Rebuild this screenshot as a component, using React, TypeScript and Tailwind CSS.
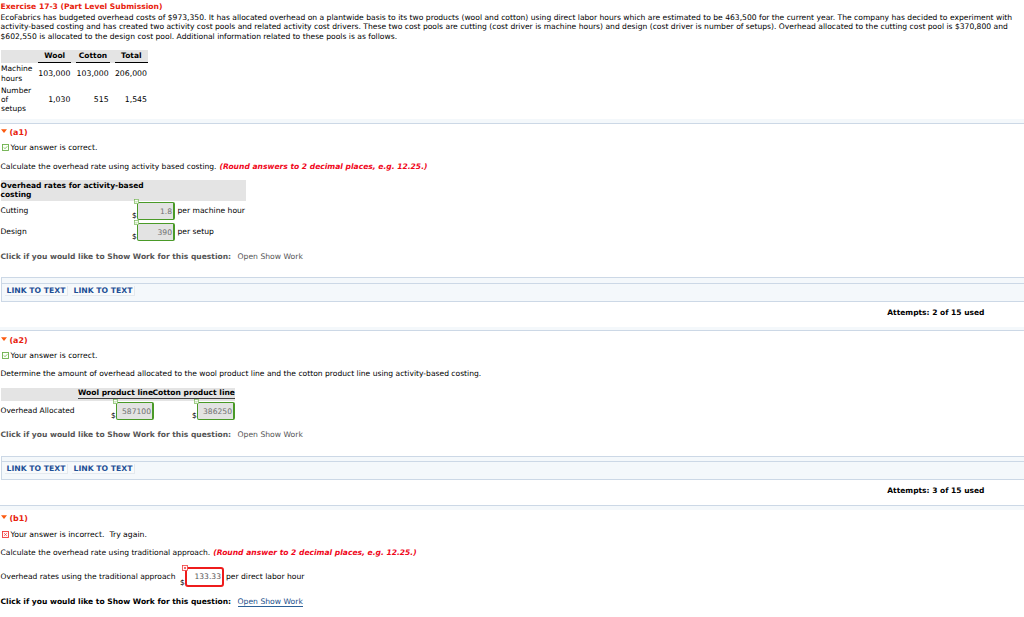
import type { ReactNode } from "react";

function StatusIcon({ ok, className }: { ok: boolean; className: string }) {
  const color = ok ? "#6cb04a" : "#f03a3a";
  return (
    <svg viewBox="0 0 7 7" className={className} fill="none" stroke={color}>
      <rect x="0.5" y="0.5" width="6" height="6" fill={ok ? "#fbfff8" : "#fff6f6"} strokeWidth="0.9" />
      {ok ? (
        <path d="M1.8 3.4 L3 4.7 L5.3 2.3" strokeWidth="0.8" />
      ) : (
        <path d="M2.3 2.3 L4.7 4.7 M4.7 2.3 L2.3 4.7" strokeWidth="0.9" />
      )}
    </svg>
  );
}

function PartHeading({ children }: { children: ReactNode }) {
  return (
    <div className="flex h-[17px] items-center font-bold text-[#e8210c]">
      <svg viewBox="0 0 6 4" className="mb-[3px] ml-px h-[4px] w-[6px]">
        <path d="M0 0.2 H6 L3 4 Z" fill="#fb5a10" />
      </svg>
      <span className="ml-[2.5px] text-[7.9px]">{children}</span>
    </div>
  );
}

function Verdict({ ok, children }: { ok: boolean; children: ReactNode }) {
  return (
    <div className="flex h-[13px] items-center text-[7.7px]">
      <StatusIcon ok={ok} className="ml-[2px] mr-[1.5px] h-[7px] w-[7px]" />
      <span className="whitespace-pre">{children}</span>
    </div>
  );
}

function Answer({ value, ok = true }: { value: string; ok?: boolean }) {
  return (
    <div className="flex items-end">
      <span className="w-[5px] leading-[8px] text-black">$</span>
      <div
        className={
          ok
            ? "relative flex h-[18px] w-[38px] items-center justify-end rounded-[2px] border border-r-2 border-[#4a9a28] bg-[#e3e3e3] pr-px pt-px text-[#707070]"
            : "relative flex h-[20px] w-[39px] items-center justify-end rounded-[3px] border-2 border-[#ee1c1c] bg-white pr-px text-[#555]"
        }
      >
        <StatusIcon ok={ok} className={ok ? "absolute -left-[4px] -top-[4px] h-[5px] w-[5px]" : "absolute -left-[5px] -top-[4px] h-[6px] w-[6px]"} />
        {value}
      </div>
    </div>
  );
}

function ShowWork({ active = false }: { active?: boolean }) {
  return (
    <div className={active ? "flex h-[12px] items-center pl-[0.5px] text-black" : "flex h-[12px] items-center pl-[0.5px] text-[#555]"}>
      <span className="w-[237px] text-[7.55px] font-bold">Click if you would like to Show Work for this question:</span>
      <span className={active ? "border-b border-[#2b5f96] text-[7.67px] leading-[8px] text-[#1c4f8a]" : "text-[7.67px]"}>
        Open Show Work
      </span>
    </div>
  );
}

function LinkPanel({ compact = false }: { compact?: boolean }) {
  return (
    <div className="ml-px border-y border-l border-[#ccd8e6] bg-[#f4f8fb]">
      <div className={compact ? "h-[4px]" : "h-[5px]"} />
      <div className="flex h-[18px] gap-[4px] border-t border-[#ccd8e6] pl-[3px] pt-[2px] text-[7.7px] font-bold text-[#1d4f96]">
        <span className="flex h-[10px] w-[63px] items-center border-b border-r border-[#e4e9ee] bg-[#f8fafb] pl-[1.5px]">LINK TO TEXT</span>
        <span className="flex h-[10px] w-[63px] items-center border-b border-r border-[#e4e9ee] bg-[#f8fafb] pl-[1.5px]">LINK TO TEXT</span>
      </div>
    </div>
  );
}

function Attempts({ children }: { children: ReactNode }) {
  return <div className="flex h-[12px] items-center justify-end pr-[39.5px] text-[7.52px] font-bold">{children}</div>;
}

const columns = [
  { name: "Wool", hours: "103,000", setups: "1,030" },
  { name: "Cotton", hours: "103,000", setups: "515" },
  { name: "Total", hours: "206,000", setups: "1,545" },
];

export default function App() {
  return (
    <div className="h-[617px] w-[1024px] overflow-hidden bg-white font-['DejaVu_Sans',Verdana,sans-serif] text-[7.6px] leading-[9.3px] text-black">
      <div className="h-[119px]">
        <div className="flex h-[12.5px] items-center pl-[0.5px] font-bold text-[#e8210c]">Exercise 17-3 (Part Level Submission)</div>
        <div className="h-[28px] whitespace-nowrap pl-[0.5px] text-[7.605px] leading-[9.6px]">
          <p>EcoFabrics has budgeted overhead costs of $973,350. It has allocated overhead on a plantwide basis to its two products (wool and cotton) using direct labor hours which are estimated to be 463,500 for the current year. The company has decided to experiment with</p>
          <p>activity-based costing and has created two activity cost pools and related activity cost drivers. These two cost pools are cutting (cost driver is machine hours) and design (cost driver is number of setups). Overhead allocated to the cutting cost pool is $370,800 and</p>
          <p>$602,550 is allocated to the design cost pool. Additional information related to these pools is as follows.</p>
        </div>
        <div className="ml-px mt-[9.5px] flex h-[13px] w-[147px] gap-[5px] bg-[#e4e4e4] pl-[37px]">
          {columns.map((c) => (
            <div key={c.name} className="flex flex-1 items-center justify-center border-b border-black text-[7.5px] font-bold">
              {c.name}
            </div>
          ))}
        </div>
        <div className="ml-px flex h-[21px] w-[147px] items-center gap-[5px]">
          <div className="w-[32px] text-[7.5px]">Machine hours</div>
          {columns.map((c) => (
            <div key={c.name} className="flex-1 pr-px text-right text-[7.75px]">{c.hours}</div>
          ))}
        </div>
        <div className="ml-px mt-px flex h-[29px] w-[147px] items-center gap-[5px]">
          <div className="w-[32px] text-[7.5px]">Number of setups</div>
          {columns.map((c) => (
            <div key={c.name} className="flex-1 pr-px text-right text-[7.75px]">{c.setups}</div>
          ))}
        </div>
      </div>

      <section className="h-[208px]">
        <div className="h-[5px] border-b border-[#ccd8e6] bg-[#f4f8fb]" />
        <PartHeading>(a1)</PartHeading>
        <Verdict ok>Your answer is correct.</Verdict>
        <div className="mt-[7px] flex h-[12px] items-center gap-[3px] pl-[0.5px]">
          <span className="text-[7.55px]">Calculate the overhead rate using activity based costing.</span>
          <span className="text-[7.57px] font-bold italic text-[#f0061a]">(Round answers to 2 decimal places, e.g. 12.25.)</span>
        </div>
        <div className="ml-[0.5px] mt-[7px] h-[21px] w-[245.5px] bg-[#e4e4e4] pt-[0.5px] text-[7.52px] font-bold">
          <div className="w-[150px]">Overhead rates for activity-based costing</div>
        </div>
        <div className="mt-px flex h-[18px] items-center pl-[0.5px]">
          <span className="w-[131.5px]">Cutting</span>
          <Answer value="1.8" />
          <span className="ml-[2.5px]">per machine hour</span>
        </div>
        <div className="mt-[3px] flex h-[18px] items-center pl-[0.5px]">
          <span className="w-[131.5px]">Design</span>
          <Answer value="390" />
          <span className="ml-[2.5px]">per setup</span>
        </div>
        <div className="mt-[10px]">
          <ShowWork />
        </div>
        <div className="mt-[14px]">
          <LinkPanel />
        </div>
        <div className="mt-[5px]">
          <Attempts>Attempts: 2 of 15 used</Attempts>
        </div>
      </section>

      <section className="h-[178px]">
        <div className="h-[4px] border-b border-[#ccd8e6] bg-[#f4f8fb]" />
        <div className="h-px" />
        <PartHeading>(a2)</PartHeading>
        <Verdict ok>Your answer is correct.</Verdict>
        <div className="mt-[6px] flex h-[12px] items-center pl-[0.5px] text-[7.59px]">
          Determine the amount of overhead allocated to the wool product line and the cotton product line using activity-based costing.
        </div>
        <div className="ml-px mt-[8px] flex h-[13px] w-[234px] bg-[#e4e4e4] pl-[77px] text-[7.55px] font-bold">
          <div className="flex h-[11px] w-full justify-between whitespace-nowrap border-b border-[#444]">
            <span>Wool product line</span>
            <span className="-ml-px">Cotton product line</span>
          </div>
        </div>
        <div className="mt-px flex h-[18px] items-center pl-[0.5px]">
          <span className="w-[110.5px] text-[7.52px]">Overhead Allocated</span>
          <Answer value="587100" />
          <div className="w-[38px]" />
          <Answer value="386250" />
        </div>
        <div className="mt-[9px]">
          <ShowWork />
        </div>
        <div className="mt-[15px]">
          <LinkPanel compact />
        </div>
        <div className="mt-[5px]">
          <Attempts>Attempts: 3 of 15 used</Attempts>
        </div>
      </section>

      <section>
        <div className="h-[5px] border-t border-[#ccd8e6] bg-[#f4f8fb]" />
        <PartHeading>(b1)</PartHeading>
        <div className="pt-px">
          <Verdict ok={false}>{"Your answer is incorrect.  Try again."}</Verdict>
        </div>
        <div className="mt-[6px] flex h-[12px] items-center gap-[3px] pl-[0.5px]">
          <span className="text-[7.55px]">Calculate the overhead rate using traditional approach.</span>
          <span className="text-[7.57px] font-bold italic text-[#f0061a]">(Round answer to 2 decimal places, e.g. 12.25.)</span>
        </div>
        <div className="mt-[8px] flex h-[20px] items-center pl-[0.5px]">
          <span className="w-[179.5px] text-[7.55px]">Overhead rates using the traditional approach</span>
          <Answer value="133.33" ok={false} />
          <span className="ml-[2px]">per direct labor hour</span>
        </div>
        <div className="mt-[9px]">
          <ShowWork active />
        </div>
      </section>
    </div>
  );
}
